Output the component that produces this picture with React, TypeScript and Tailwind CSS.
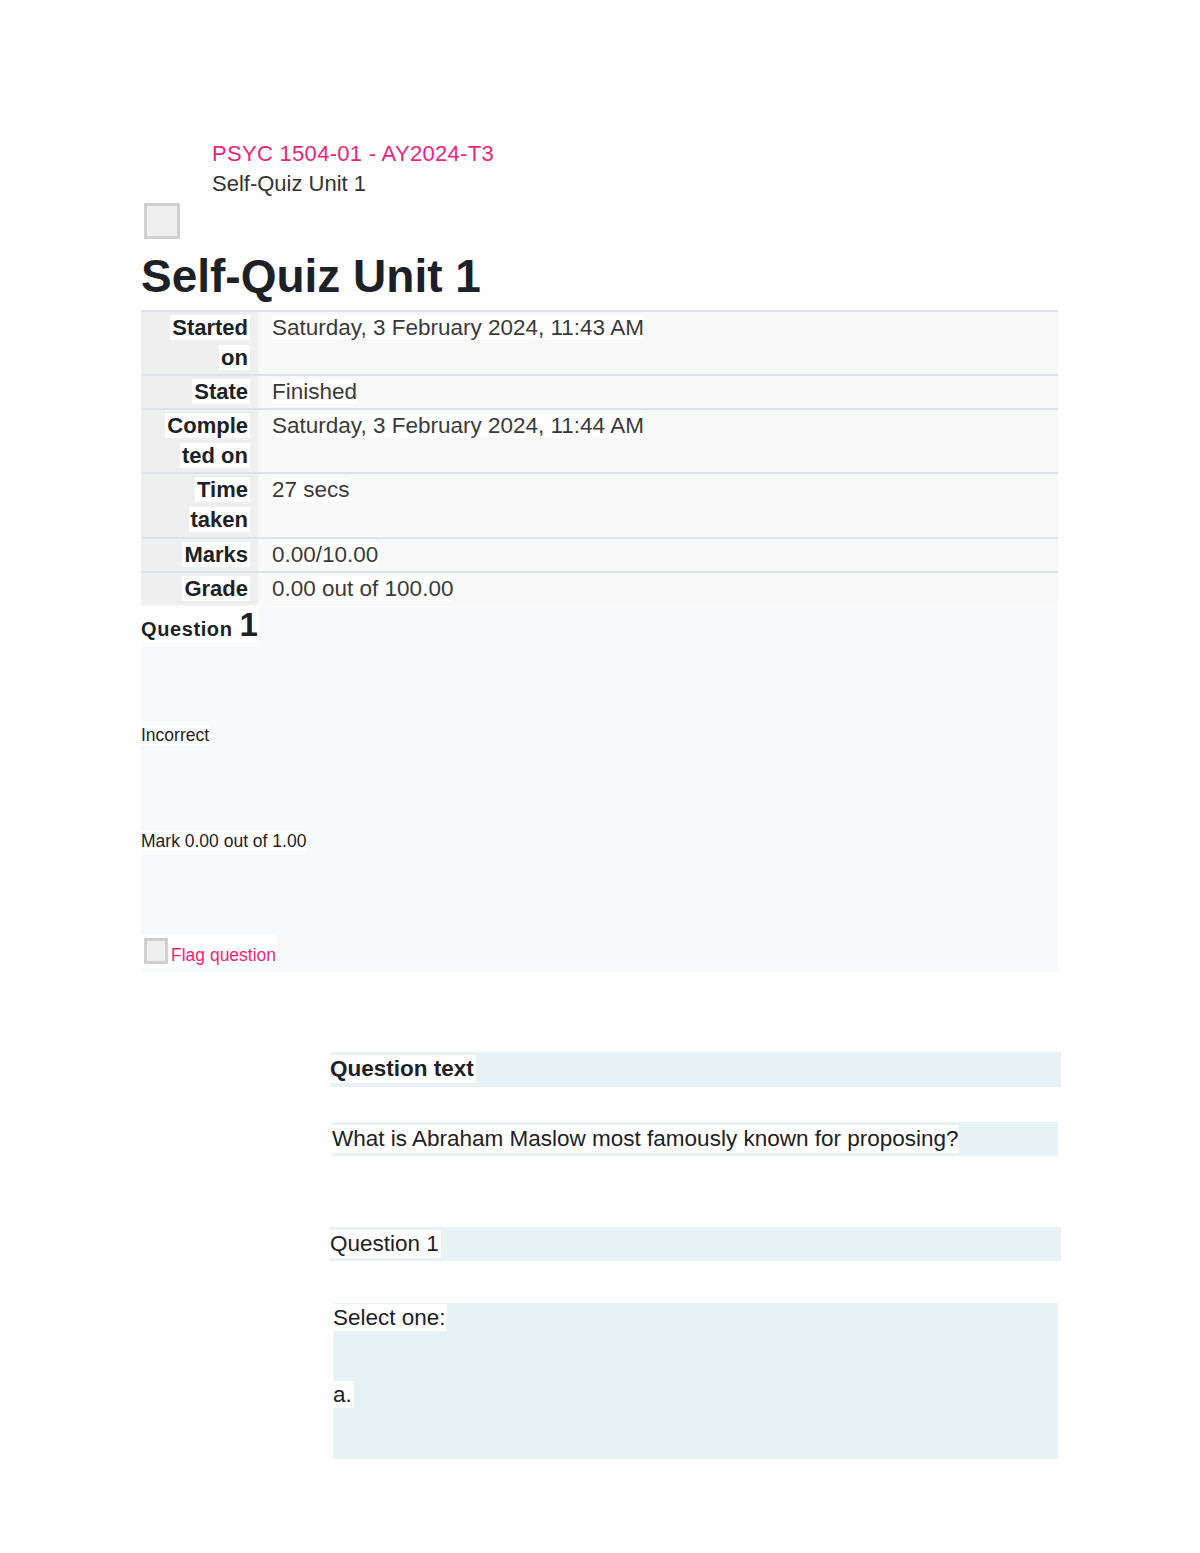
const font = { fontFamily: '"Liberation Sans", Arial, sans-serif' };

const rows = [
  { label: ['Started', 'on'], value: 'Saturday, 3 February 2024, 11:43 AM', h: 'h-[64px]' },
  { label: ['State'], value: 'Finished', h: 'h-[34px]' },
  { label: ['Comple', 'ted on'], value: 'Saturday, 3 February 2024, 11:44 AM', h: 'h-[64px]' },
  { label: ['Time', 'taken'], value: '27 secs', h: 'h-[65px]' },
  { label: ['Marks'], value: '0.00/10.00', h: 'h-[34px]' },
  { label: ['Grade'], value: '0.00 out of 100.00', h: 'h-[34px]' },
];

function Checkbox({ size }: { size: string }) {
  return <div className={`${size} border-[3px] border-[#cfcfcf] bg-[#efefef]`} />;
}

export default function App() {
  return (
    <div className="w-[1200px] min-h-[1553px] bg-white text-[#1d2125]" style={font}>
      <div className="ml-[141px] w-[917px] pt-[139px]">
        {/* breadcrumb */}
        <div className="pl-[71px] text-[22px] leading-[30px]">
          <div className="text-[#ef1f7c] tracking-[0.3px]">PSYC 1504-01 - AY2024-T3</div>
          <div className="text-[#333]">Self-Quiz Unit 1</div>
        </div>

        <div className="mt-[4px] ml-[3px]">
          <Checkbox size="w-[36px] h-[36px]" />
        </div>

        <h1 className="mt-[14px] text-[46px] leading-[46px] font-bold text-[#1d2125]">Self-Quiz Unit 1</h1>

        {/* summary table */}
        <div className="mt-[11px]">
          {rows.map((r) => (
            <div key={r.value} className={`flex border-t-2 border-[#dee2e6] ${r.h}`}>
              <div className="w-[117px] shrink-0 bg-[#efefef] pr-[8px] pt-[1px] text-right text-[22px] leading-[30px] font-bold">
                {r.label.map((l) => (
                  <div key={l}>
                    <span className="bg-white px-[2px]">{l}</span>
                  </div>
                ))}
              </div>
              <div className="flex-1 bg-[#f8f8f8] pl-[14px] pt-[1px] text-[22.5px] leading-[30px] text-[#3a3a3a]">
                <span className="bg-white">{r.value}</span>
              </div>
            </div>
          ))}
        </div>

        {/* question info */}
        <div className="h-[367px] bg-[#f8f9fa] flex flex-col items-start">
          <div className="mt-[1px] h-[37px] w-[118px] bg-white flex items-baseline">
            <span className="text-[20px] font-bold tracking-[0.6px]">Question</span>
            <span className="ml-[7px] text-[33px] leading-[37px] font-bold">1</span>
          </div>
          <div className="mt-[82px] bg-white text-[17.5px] leading-[20px] text-[#222]">Incorrect</div>
          <div className="mt-[86px] bg-white text-[17.5px] leading-[20px] text-[#222]">
            Mark 0.00 out of 1.00
          </div>
          <div className="mt-[84px] h-[33px] w-[136px] bg-white flex items-end pb-[3px]">
            <div className="ml-[3px] mb-[1px]">
              <Checkbox size="w-[24px] h-[26px]" />
            </div>
            <span className="ml-[3px] text-[17.5px] leading-[20px] text-[#ef1f7c]">Flag question</span>
          </div>
        </div>

        {/* question body */}
        <div className="mt-[80px] ml-[189px] text-[22.5px] text-[#1d2125]">
          <div className="w-[731px] h-[35px] bg-[#e7f2f4]">
            <span className="inline-block h-[28px] leading-[28px] bg-white pr-[2px] font-bold">
              Question text
            </span>
          </div>

          <div className="mt-[35px] ml-[2px] w-[726px] h-[34px] bg-[#e7f2f4]">
            <span className="-ml-[2px] inline-block h-[28px] leading-[28px] bg-white pl-[2px]">
              What is Abraham Maslow most famously known for proposing?
            </span>
          </div>

          <div className="mt-[71px] w-[731px] h-[34px] bg-[#e7f2f4]">
            <span className="inline-block h-[28px] leading-[28px] bg-white pr-[2px]">Question 1</span>
          </div>

          <div className="mt-[42px] ml-[3px] w-[725px] h-[156px] bg-[#e7f2f4] flex flex-col items-start">
            <span className="mt-[1px] h-[27px] leading-[27px] bg-white pr-[1px]">Select one:</span>
            <span className="mt-[50px] h-[27px] leading-[27px] bg-white pr-[2px]">a.</span>
          </div>
        </div>
      </div>
    </div>
  );
}
